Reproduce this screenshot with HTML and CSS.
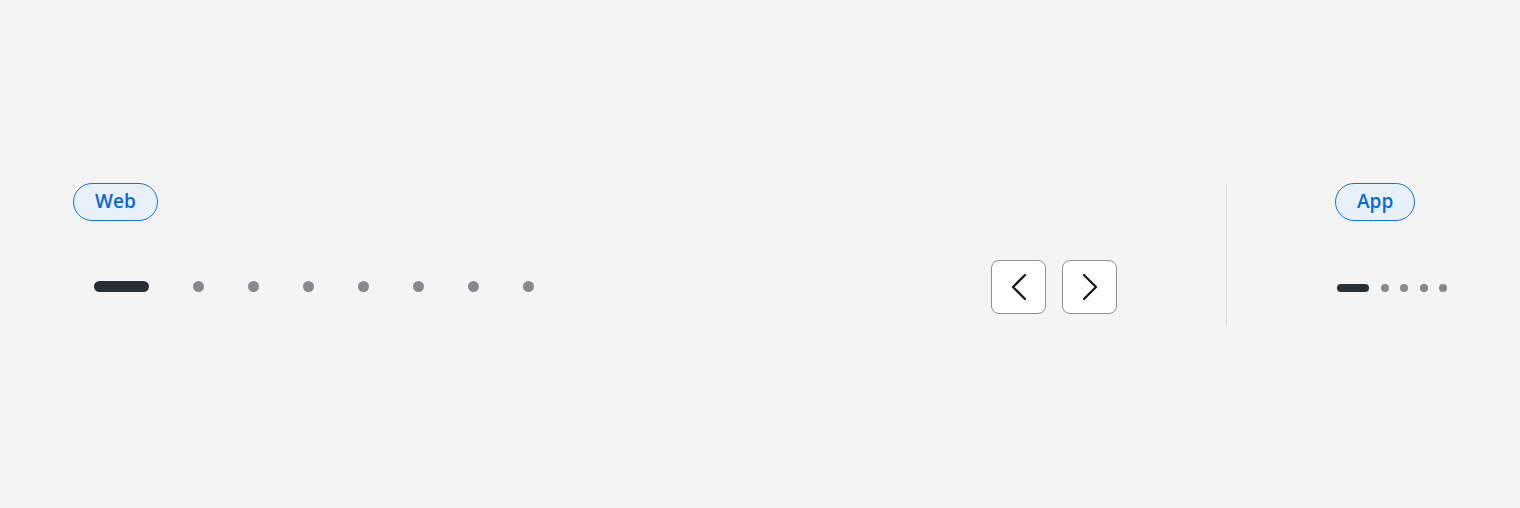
FILE: index.html
```html
<!DOCTYPE html>
<html lang="en">
<head>
<meta charset="utf-8">
<title>Pagination indicators</title>
<link rel="stylesheet" href="styles.css">
</head>
<body>
<main class="stage">
  <section class="panel panel-web">
    <span class="badge">Web</span>
    <div class="row">
      <div class="dots dots-web">
        <span class="bar"></span>
        <span class="dot"></span>
        <span class="dot"></span>
        <span class="dot"></span>
        <span class="dot"></span>
        <span class="dot"></span>
        <span class="dot"></span>
        <span class="dot"></span>
      </div>
      <div class="nav">
        <button class="nav-btn" aria-label="Previous">
          <svg width="28" height="28" viewBox="0 0 28 28"><polyline points="20,2 8,14 20,26" fill="none" stroke="#15191e" stroke-width="2.3" stroke-linecap="round" stroke-linejoin="round"/></svg>
        </button>
        <button class="nav-btn" aria-label="Next">
          <svg width="28" height="28" viewBox="0 0 28 28"><polyline points="8,2 20,14 8,26" fill="none" stroke="#15191e" stroke-width="2.3" stroke-linecap="round" stroke-linejoin="round"/></svg>
        </button>
      </div>
    </div>
  </section>
  <div class="divider"></div>
  <section class="panel panel-app">
    <span class="badge">App</span>
    <div class="row">
      <div class="dots dots-app">
        <span class="bar"></span>
        <span class="dot"></span>
        <span class="dot"></span>
        <span class="dot"></span>
        <span class="dot"></span>
      </div>
    </div>
  </section>
</main>
</body>
</html>
```
FILE: styles.css
```css
* { box-sizing: border-box; }
html, body { margin: 0; height: 100%; }
body {
  background: #f4f4f4;
  font-family: "Open Sans", "Noto Sans", sans-serif;
}
.stage {
  height: 508px;
  display: flex;
  align-items: center;
  padding: 0 73px;
  gap: 108px;
}
.panel {
  display: flex;
  flex-direction: column;
  align-items: flex-start;
  gap: 39px;
  padding-bottom: 12px;
}
.panel-web { flex: 1; margin-right: 1px; }
.divider {
  align-self: stretch;
  width: 1px;
  background: #d6d6d6;
  margin: 184px 0 181px;
}
.badge {
  height: 38px;
  display: inline-flex;
  align-items: center;
  padding: 0 21px;
  border: 1px solid #1670d6;
  border-radius: 19px;
  background: #e8f0fa;
  color: #0b68cc;
  font-size: 19px;
  font-weight: 600;
  line-height: 1;
}
.row {
  width: 100%;
  height: 54px;
  display: flex;
  align-items: center;
  justify-content: space-between;
}
.dots { display: flex; align-items: center; }
.dots-web { gap: 44px; padding-left: 21px; }
.dots-web .bar { width: 55px; height: 11px; border-radius: 6px; background: #262f38; }
.dots-web .dot { width: 11px; height: 11px; border-radius: 50%; background: #868a90; }
.dots-app { gap: 11.5px; padding-left: 2px; margin-top: 2px; }
.dots-app .bar { width: 32px; height: 8px; border-radius: 4px; background: #262f38; }
.dots-app .dot { width: 8px; height: 8px; border-radius: 50%; background: #868a90; }
.nav { display: flex; gap: 16px; }
.nav-btn {
  width: 55px;
  height: 54px;
  padding: 0;
  display: flex;
  align-items: center;
  justify-content: center;
  background: #ffffff;
  border: 1px solid #8c8f94;
  border-radius: 8px;
}
.nav-btn svg { display: block; }
```
